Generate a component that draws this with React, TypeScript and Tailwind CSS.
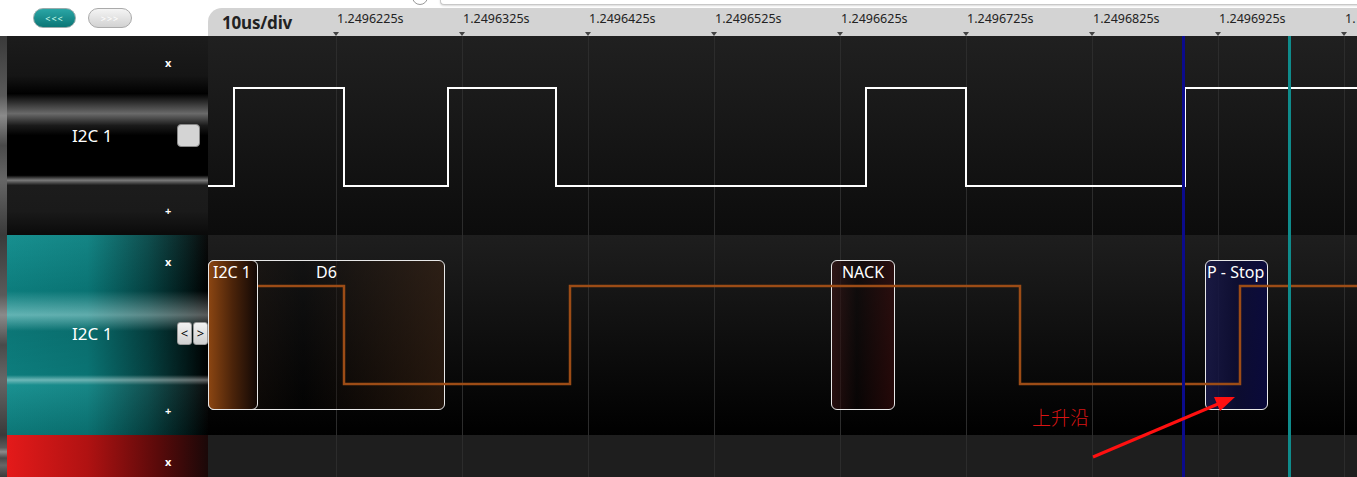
import React from 'react';

const TICKS = [128, 254, 380, 506, 632, 758, 884, 1010, 1136];
const LABELS = ['1.2496225s', '1.2496325s', '1.2496425s', '1.2496525s', '1.2496625s', '1.2496725s', '1.2496825s', '1.2496925s', '1.'];

const Header: React.FC = () => (
  <div className="flex h-9 bg-white">
    <div className="flex w-[208px] shrink-0 gap-3 pl-[33px] pt-2">
      <button className="flex h-5 w-[43px] items-center justify-center rounded-full border border-[#9aa] bg-[linear-gradient(to_bottom,#2aa6a6,#0b7676)] text-[9px] leading-none tracking-[1px] text-[#cfe]">
        &lt;&lt;&lt;
      </button>
      <button className="flex h-5 w-[44px] items-center justify-center rounded-full border border-[#aaa] bg-[linear-gradient(to_bottom,#f4f4f4,#d2d2d2)] text-[9px] leading-none tracking-[1px] text-white">
        &gt;&gt;&gt;
      </button>
    </div>
    <div className="relative flex-1">
      {/* scroll slider peeking in from above */}
      <div className="absolute left-[204px] top-[-11px] h-4 w-4 rounded-full border border-[#999] bg-white" />
      <div className="absolute left-[232px] right-0 top-[-4px] h-[9px] rounded-bl-sm border-b border-l border-[#c8c8c8] bg-white shadow-[0_1px_2px_rgba(0,0,0,0.15)]" />
      <div className="mt-2 flex h-7 items-center rounded-tl-[14px] bg-[#d3d3d3] text-[#222]">
        <div className="w-[128px] shrink-0 pl-[14px] text-[17px] font-bold leading-none tracking-[-0.2px]">10us/div</div>
        {LABELS.map((l) => (
          <div key={l} className="relative flex h-full w-[126px] shrink-0 flex-col justify-between pl-[1px] pt-[5px]">
            <span className="text-[12.5px] leading-none">{l}</span>
            <span className="ml-[-4px] h-0 w-0 border-x-[3px] border-t-[4px] border-x-transparent border-t-[#444]" />
          </div>
        ))}
      </div>
    </div>
  </div>
);

const Strip: React.FC = () => (
  <div className="w-[7px] shrink-0 bg-[linear-gradient(to_bottom,#3a3a3a,#5a5a5a_30%,#8a8a8a_40%,#4a4a4a_55%,#666_72%,#3a3a3a)]" />
);

const Mark: React.FC<{ children: React.ReactNode }> = ({ children }) => (
  <span className="h-3 pl-[158px] text-[11px] font-bold leading-3 text-white">{children}</span>
);

const ChannelLabel: React.FC<{ bg: string; h: string; children?: React.ReactNode }> = ({ bg, h, children }) => (
  <div className={`flex ${h} bg-black`}>
    <Strip />
    <div className={`flex flex-1 flex-col justify-between pb-[18px] pt-[21px] ${bg}`}>{children}</div>
  </div>
);

const SmallBtn: React.FC<{ children: React.ReactNode }> = ({ children }) => (
  <span className="flex h-[23px] w-[15px] items-center justify-center rounded-[3px] border border-[#999] bg-[linear-gradient(to_bottom,#f2f2f2,#d0d0d0)] text-[13px] leading-none text-black">
    {children}
  </span>
);

const LeftPanel: React.FC = () => (
  <div className="flex w-[208px] shrink-0 flex-col">
    <ChannelLabel
      h="h-[199px]"
      bg="bg-[linear-gradient(to_bottom,#1c1c1c_0%,#151515_20%,#000_29%,#6a6a6a_39%,#1a1a1a_45%,#000_50%,#000_70%,#7a7a7a_72.5%,#1c1c1c_75%,#1a1a1a_88%,#0a0a0a_100%)]"
    >
      <Mark>x</Mark>
      <div className="mb-[4px] flex items-center pl-[65px]">
        <span className="w-[105px] text-[17px] leading-none text-white">I2C 1</span>
        <span className="h-[23px] w-[23px] rounded-[4px] border border-[#888] bg-[#d4d4d4]" />
      </div>
      <Mark>+</Mark>
    </ChannelLabel>
    <ChannelLabel
      h="h-[200px]"
      bg="bg-[linear-gradient(to_bottom,rgba(255,255,255,0.04)_0%,rgba(0,0,0,0.1)_28%,rgba(255,255,255,0.35)_40%,rgba(0,0,0,0.15)_48%,rgba(0,0,0,0.1)_70%,rgba(255,255,255,0.4)_72.5%,rgba(255,255,255,0.05)_75%,rgba(0,0,0,0.15)_100%),linear-gradient(to_right,#0e8b8b_0%,#0b8080_40%,#064848_70%,#021a1a_90%,#000_100%)]"
    >
      <Mark>x</Mark>
      <div className="mb-[7px] flex items-center pl-[65px]">
        <span className="w-[105px] text-[17px] leading-none text-white">I2C 1</span>
        <div className="flex gap-[1px]">
          <SmallBtn>&lt;</SmallBtn>
          <SmallBtn>&gt;</SmallBtn>
        </div>
      </div>
      <Mark>+</Mark>
    </ChannelLabel>
    <div className="flex flex-1 bg-black">
      <Strip />
      <div className="flex flex-1 flex-col pt-[21px] bg-[linear-gradient(to_right,#e41a1a_0%,#b01212_40%,#5a0a0a_75%,#1a0808_100%)]">
        <Mark>x</Mark>
      </div>
    </div>
  </div>
);

const Box: React.FC<{ className: string; label: string; labelClass?: string }> = ({ className, label, labelClass }) => (
  <div className={`absolute top-[224px] h-[150px] rounded-[6px] border-[1.5px] border-[#e8e8e8] ${className}`}>
    <div className={`whitespace-nowrap text-[16px] leading-[22px] text-white ${labelClass ?? 'text-center'}`}>{label}</div>
  </div>
);

const Waveforms: React.FC = () => (
  <div className="relative flex-1 overflow-hidden">
    <div className="flex h-full flex-col">
      <div className="h-[199px] bg-[linear-gradient(to_bottom,#202020,#0c0c0c)]" />
      <div className="h-[200px] bg-[linear-gradient(to_bottom,#1e1e1e,#000)]" />
      <div className="flex-1 bg-[#1e1e1e]" />
    </div>
    <svg className="absolute inset-0" width="1149" height="441">
      {TICKS.map((x) => (
        <line key={x} x1={x + 0.5} y1={0} x2={x + 0.5} y2={441} stroke="#2c2c2c" strokeWidth={1} />
      ))}
      <polyline
        points="0,150 26,150 26,52 136,52 136,150 240,150 240,52 348,52 348,150 658,150 658,52 758,52 758,150 977,150 977,52 1149,52"
        fill="none"
        stroke="#ffffff"
        strokeWidth={2}
      />
    </svg>
    <Box className="left-0 w-[237px] bg-[linear-gradient(to_right,rgba(40,25,15,0.5),rgba(0,0,0,0.3)_40%,rgba(60,35,18,0.55))]" label="D6" labelClass="text-center" />
    <Box className="left-0 w-[50px] bg-[linear-gradient(to_right,#8a4512,#4a230a_50%,#120805)]" label="I2C 1" labelClass="pl-[4px]" />
    <Box className="left-[623px] w-[64px] bg-[linear-gradient(to_right,rgba(60,20,20,0.6),rgba(10,5,5,0.6)_40%,rgba(50,10,10,0.7))]" label="NACK" />
    <Box className="left-[997px] w-[63px] bg-[linear-gradient(to_right,rgba(26,26,74,0.85),rgba(13,13,54,0.85)_50%,rgba(10,10,64,0.9))]" label="P - Stop" labelClass="pl-[1px]" />
    <svg className="absolute inset-0" width="1149" height="441">
      <polyline
        points="50,250 136,250 136,348 362,348 362,250 812,250 812,348 1032,348 1032,250 1149,250"
        fill="none"
        stroke="#9c4c16"
        strokeWidth={2.5}
      />
      <line x1={975.5} y1={0} x2={975.5} y2={441} stroke="#0b0b8c" strokeWidth={3} />
      <line x1={1081.5} y1={0} x2={1081.5} y2={441} stroke="#0f8b8b" strokeWidth={3} />
      <line x1={885} y1={421} x2={1010} y2={368} stroke="#ff1010" strokeWidth={3} />
      <polygon points="1027,361 1006,361 1012,375" fill="#ff1010" />
    </svg>
    <span className="absolute left-[824px] top-[371px] text-[19px] font-light leading-none text-[#d81414] [font-family:'Noto_Sans_CJK_SC',sans-serif]">
      上升沿
    </span>
  </div>
);

export default function App() {
  return (
    <div className="h-[477px] w-[1357px] overflow-hidden bg-white [font-family:'Noto_Sans','Open_Sans',sans-serif]">
      <Header />
      <div className="flex h-[441px]">
        <LeftPanel />
        <Waveforms />
      </div>
    </div>
  );
}
